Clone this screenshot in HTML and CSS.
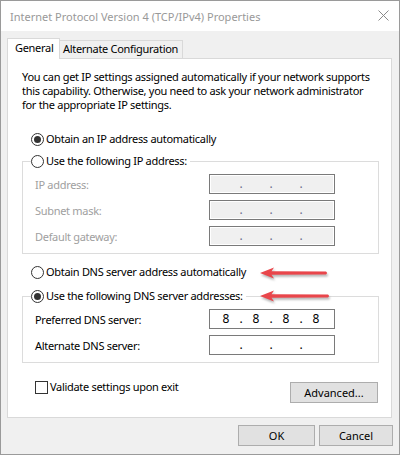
FILE: index.html
```html
<!DOCTYPE html>
<html>
<head>
<meta charset="utf-8">
<link rel="stylesheet" href="styles.css">
</head>
<body>
<div class="window">
  <div class="titlebar">
    <span class="title">Internet Protocol Version 4 (TCP/IPv4) Properties</span>
    <svg class="close" width="11" height="11" viewBox="0 0 11 11"><path d="M0.5 0.5 L10.5 10.5 M10.5 0.5 L0.5 10.5" stroke="#8a8a8a" stroke-width="1" fill="none"/></svg>
  </div>
  <div class="body">
    <div class="tabs">
      <div class="tab active">General</div>
      <div class="tab">Alternate Configuration</div>
    </div>
    <div class="panel">
      <p class="intro">You can get IP settings assigned automatically if your network supports<br>this capability. Otherwise, you need to ask your network administrator<br>for the appropriate IP settings.</p>
      <div class="radio-row r1"><span class="radio checked"></span><span>Obtain an IP address automatically</span></div>
      <fieldset class="group g1">
        <legend><span class="radio"></span><span>Use the following IP address:</span></legend>
        <div class="field disabled"><span class="lbl">IP address:</span><div class="ipbox"><span class="seg"></span><span class="dot">.</span><span class="seg"></span><span class="dot">.</span><span class="seg"></span><span class="dot">.</span><span class="seg"></span></div></div>
        <div class="field disabled"><span class="lbl">Subnet mask:</span><div class="ipbox"><span class="seg"></span><span class="dot">.</span><span class="seg"></span><span class="dot">.</span><span class="seg"></span><span class="dot">.</span><span class="seg"></span></div></div>
        <div class="field disabled"><span class="lbl">Default gateway:</span><div class="ipbox"><span class="seg"></span><span class="dot">.</span><span class="seg"></span><span class="dot">.</span><span class="seg"></span><span class="dot">.</span><span class="seg"></span></div></div>
      </fieldset>
      <div class="radio-row r3"><span class="radio"></span><span>Obtain DNS server address automatically</span></div>
      <fieldset class="group g2">
        <legend><span class="radio checked"></span><span>Use the following DNS server addresses:</span></legend>
        <div class="field"><span class="lbl">Preferred DNS server:</span><div class="ipbox"><span class="seg">8</span><span class="dot">.</span><span class="seg">8</span><span class="dot">.</span><span class="seg">8</span><span class="dot">.</span><span class="seg">8</span></div></div>
        <div class="field"><span class="lbl">Alternate DNS server:</span><div class="ipbox"><span class="seg"></span><span class="dot">.</span><span class="seg"></span><span class="dot">.</span><span class="seg"></span><span class="dot">.</span><span class="seg"></span></div></div>
      </fieldset>
      <div class="bottom-row">
        <div class="check-row"><span class="checkbox"></span><span>Validate settings upon exit</span></div>
        <button class="btn adv">Advanced...</button>
      </div>
    </div>
    <div class="footer">
      <button class="btn ok">OK</button>
      <button class="btn cancel">Cancel</button>
    </div>
  </div>
  <svg class="arrow a1" width="74" height="16" viewBox="0 0 74 16"><path d="M1 6 L15 0.5 L12.5 4.3 L67 4.6 Q69 6 67 7.6 L12.5 7.8 L15 11.5 Z" fill="#e9464b"/></svg>
  <svg class="arrow a2" width="76" height="16" viewBox="0 0 76 16"><path d="M1 6 L15 0.5 L12.5 4.3 L69 4.6 Q71 6 69 7.6 L12.5 7.8 L15 11.5 Z" fill="#e9464b"/></svg>
</div>
</body>
</html>
```
FILE: styles.css
```css
* { box-sizing: border-box; }
html, body { margin: 0; padding: 0; background: #fff; }
body { font-family: "Segoe UI", "Noto Sans", sans-serif; font-size: 11px; color: #000; }

.window {
  position: relative;
  width: 400px;
  height: 455px;
  border: 1px solid #9a9a9a;
  background: #f0f0f0;
  overflow: hidden;
}

.titlebar {
  height: 30px;
  background: #fff;
  display: flex;
  align-items: center;
  justify-content: space-between;
  padding: 0 10px 0 9px;
}
.title { color: #999; font-size: 11px; }
.close { display: block; margin-top: -1px; }

.body { padding: 7px 0 0 6px; letter-spacing: -0.3px; }

.tabs { display: flex; align-items: flex-end; height: 20px; }
.tab {
  height: 18px;
  border: 1px solid #d9d9d9;
  border-bottom: none;
  background: #f0f0f0;
  padding: 0 4px 0 3px;
  line-height: 16px;
  white-space: nowrap;
}
.tab.active {
  position: relative;
  z-index: 1;
  height: 21px;
  margin-bottom: -1px;
  background: #fff;
  width: 53px;
  padding-left: 7px;
  line-height: 18px;
  margin-right: -1px;
}

.panel {
  width: 385px;
  height: 360px;
  background: #fff;
  border: 1px solid #d9d9d9;
  display: flex;
  flex-direction: column;
}

.intro {
  margin: 11px 0 0 14px;
  line-height: 14px;
  white-space: nowrap;
}

.radio-row, legend, .check-row {
  display: flex;
  align-items: center;
  height: 14px;
  line-height: 14px;
  white-space: nowrap;
}
.radio-row { margin-left: 23px; }
.r1 { margin-top: 20px; }
.r3 { margin-top: 11px; }

.radio {
  width: 13px;
  height: 13px;
  border: 1px solid #333;
  border-radius: 50%;
  background: #fff;
  margin-right: 2px;
  display: flex;
  align-items: center;
  justify-content: center;
  flex: none;
}
.radio.checked::after {
  content: "";
  width: 7px;
  height: 7px;
  border-radius: 50%;
  background: #333;
}

.group {
  margin: 0 12px 0 14px;
  padding: 0 0 7px 8px;
  border: 1px solid #dcdcdc;
  min-width: 0;
}
.g1 { margin-top: 8px; }
.g2 { margin-top: 10px; }
legend { padding: 0 3px 0 0; }

.field {
  display: flex;
  align-items: center;
  margin-top: 6px;
  margin-left: 4px;
}
.field + .field { margin-top: 6px; }
.lbl { width: 174px; flex: none; }
.disabled .lbl { color: #a0a0a0; }

.ipbox {
  width: 126px;
  height: 20px;
  border: 1px solid #7a7a7a;
  background: #fff;
  display: flex;
  align-items: center;
  padding-left: 4px;
  line-height: 16px;
  font-size: 12px;
  letter-spacing: 0;
}
.disabled .ipbox {
  background: #f0f0f0;
  box-shadow: inset 0 0 0 1px #fff;
}
.seg { width: 24px; text-align: center; }
.dot { width: 6px; text-align: center; }
.disabled .dot { color: #6e6e8e; }

.bottom-row {
  display: flex;
  justify-content: space-between;
  align-items: flex-start;
  margin: 17px 13px 0 27px;
}
.checkbox {
  width: 13px;
  height: 13px;
  border: 1px solid #333;
  background: #fff;
  margin-right: 2px;
  flex: none;
}

.btn {
  font-family: inherit;
  font-size: 11px;
  letter-spacing: 0;
  color: #000;
  background: #e1e1e1;
  border: 1px solid #adadad;
  height: 21px;
  padding: 0;
  margin: 0;
}
.adv { width: 88px; margin-top: 2px; }

.footer {
  display: flex;
  justify-content: flex-end;
  gap: 4px;
  margin-top: 7px;
  padding-right: 6px;
}
.ok { width: 77px; }
.cancel { width: 74px; }

.arrow {
  position: absolute;
  filter: drop-shadow(1px 2px 1px rgba(0,0,0,0.3));
}
.a1 { left: 258px; top: 266px; }
.a2 { left: 258px; top: 289px; }
```
